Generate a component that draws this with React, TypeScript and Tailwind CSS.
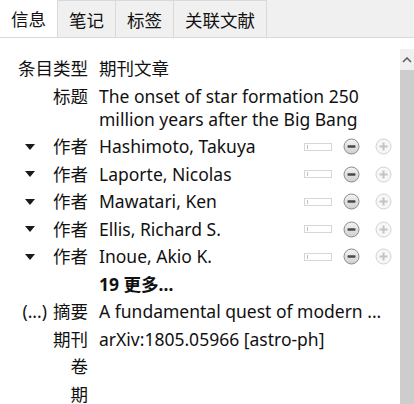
import React from "react";

const font = { fontFamily: '"Noto Sans", "Noto Sans CJK SC", sans-serif' };

function Triangle() {
  return (
    <svg width="10" height="6" viewBox="0 0 10 6" className="block">
      <path d="M0 0 L10 0 L5 6 Z" fill="#1a1a1a" />
    </svg>
  );
}

function MinusBtn() {
  return (
    <svg width="17" height="17" viewBox="0 0 17 17" className="block">
      <defs>
        <linearGradient id="mg" x1="0" y1="0" x2="0" y2="1">
          <stop offset="0" stopColor="#f4f4f4" />
          <stop offset="1" stopColor="#cfcfcf" />
        </linearGradient>
      </defs>
      <circle cx="8.5" cy="8.5" r="7.5" fill="url(#mg)" stroke="#8a8a8a" strokeWidth="1" />
      <rect x="4.5" y="7.3" width="8" height="2.4" rx="0.6" fill="#4a4a4a" />
    </svg>
  );
}

function PlusBtn() {
  return (
    <svg width="17" height="17" viewBox="0 0 17 17" className="block">
      <circle cx="8.5" cy="8.5" r="7.5" fill="#f7f7f7" stroke="#d2d2d2" strokeWidth="1" />
      <rect x="4.5" y="7.5" width="8" height="2" fill="#c4c4c4" />
      <rect x="7.5" y="4.5" width="2" height="8" fill="#c4c4c4" />
    </svg>
  );
}

function Row({
  label,
  value,
  left,
  controls,
  bold,
}: {
  label: string;
  value?: React.ReactNode;
  left?: React.ReactNode;
  controls?: boolean;
  bold?: boolean;
}) {
  return (
    <div className="flex items-start py-[2.25px] leading-[23px]">
      <div className="flex w-[88px] shrink-0 items-center justify-end whitespace-nowrap">
        {left}
        <div className="text-right">{label}</div>
      </div>
      <div className={"ml-[11px] flex-1 whitespace-nowrap " + (bold ? "font-bold" : "")}>{value}</div>
      {controls && (
        <div className="flex h-[23px] items-center">
          <div className="relative mr-[11px] h-[8px] w-[28px] border border-[#d6d6d6] bg-white">
            <div className="absolute left-[2px] top-[1px] h-[4px] w-px bg-[#bdbdbd]" />
          </div>
          <MinusBtn />
          <div className="w-[15px]" />
          <PlusBtn />
        </div>
      )}
    </div>
  );
}

export default function App() {
  const tabs = ["信息", "笔记", "标签", "关联文献"];
  const authors = [
    "Hashimoto, Takuya",
    "Laporte, Nicolas",
    "Mawatari, Ken",
    "Ellis, Richard S.",
    "Inoue, Akio K.",
  ];
  return (
    <div className="h-[404px] w-[414px] overflow-hidden bg-white text-[17.5px] text-[#111]" style={font}>
      <div className="flex h-[38px] border-b border-[#d9d9d9] bg-[#f0f0f0]">
        {tabs.map((t, i) => (
          <div
            key={t}
            className={
              "flex items-center border-r border-[#d9d9d9] px-[11px] pt-[1px] leading-[20px] " +
              (i === 0 ? "bg-white" : "border-t border-t-[#d9d9d9]")
            }
          >
            {t}
          </div>
        ))}
      </div>
      <div className="flex h-[366px]">
        <div className="flex-1 pr-[8px] pt-[17px]">
          <Row label="条目类型" value="期刊文章" />
          <Row
            label="标题"
            value={
              <>
                The onset of star formation 250
                <br />
                million years after the Big Bang
              </>
            }
          />
          {authors.map((a) => (
            <Row
              key={a}
              label="作者"
              value={a}
              left={
                <div className="mr-[18px]">
                  <Triangle />
                </div>
              }
              controls
            />
          ))}
          <Row label="" value="19 更多..." bold />
          <Row
            label="摘要"
            value="A fundamental quest of modern ..."
            left={<span className="mr-[6px]">(...)</span>}
          />
          <Row label="期刊" value="arXiv:1805.05966 [astro-ph]" />
          <Row label="卷" />
          <Row label="期" />
        </div>
        <div className="mt-[11px] flex w-[14px] shrink-0 flex-col">
          <div className="flex h-[21px] items-center justify-center bg-[#f0f0f0]">
            <svg width="10" height="6" viewBox="0 0 10 6">
              <path d="M1 5 L5 1 L9 5" fill="none" stroke="#606060" strokeWidth="1.6" />
            </svg>
          </div>
          <div className="flex-1 bg-[#cdcdcd]" />
        </div>
      </div>
    </div>
  );
}
